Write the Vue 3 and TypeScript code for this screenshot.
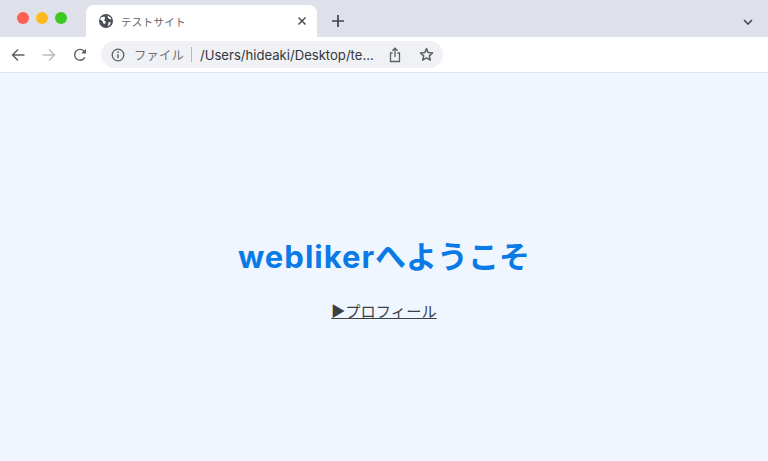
<script setup lang="ts">
const tabTitle = 'テストサイト'
const scheme = 'ファイル'
const urlText = '/Users/hideaki/Desktop/te...'
const lights = ['#fd5f50', '#fdb920', '#3dc91f']
</script>

<template>
  <div class="window">
    <div class="tabstrip">
      <div class="lights">
        <span v-for="c in lights" :key="c" class="light" :style="{ background: c }"></span>
      </div>
      <div class="tab">
        <svg class="favicon" width="14" height="14" viewBox="0 0 14 14">
          <circle cx="7" cy="7" r="7" fill="#4a4e55" />
          <path d="M2 3.2 5.4 2.6 6.2 4.6 4.9 6.2 6.8 7.6 6 10 4.2 9.4 3.4 7 1 5.6Z" fill="#fff" />
          <path d="M8.6 1.6 11.6 3.4 12.4 5.4 10.2 5 8.8 3.4ZM9.6 8.2 11.8 8 10.8 11 8.8 12.2Z" fill="#fff" />
        </svg>
        <span class="tab-title">{{ tabTitle }}</span>
        <svg class="tab-close" width="10" height="10" viewBox="0 0 10 10">
          <path d="M1.5 1.5 8.5 8.5M8.5 1.5 1.5 8.5" stroke="#4a4e55" stroke-width="1.5" fill="none" />
        </svg>
      </div>
      <svg class="new-tab" width="12" height="12" viewBox="0 0 12 12">
        <path d="M6 0V12M0 6H12" stroke="#3f434a" stroke-width="1.7" fill="none" />
      </svg>
      <svg class="tab-menu" width="10" height="6" viewBox="0 0 10 6">
        <path d="M1 1 5 5 9 1" stroke="#44484f" stroke-width="1.6" fill="none" />
      </svg>
    </div>

    <div class="toolbar">
      <svg class="nav" width="14" height="14" viewBox="0 0 14 14">
        <path d="M13.5 7H1.5M7 1.5 1.5 7 7 12.5" stroke="#5b5f66" stroke-width="1.4" fill="none" />
      </svg>
      <svg class="nav" width="14" height="14" viewBox="0 0 14 14">
        <path d="M.5 7H12.5M7 1.5 12.5 7 7 12.5" stroke="#b9bcc1" stroke-width="1.4" fill="none" />
      </svg>
      <svg class="nav" width="14" height="14" viewBox="0 0 14 14">
        <path d="M11.9 9.2A5.4 5.4 0 1 1 11.4 3.6" stroke="#5b5f66" stroke-width="1.4" fill="none" />
        <path d="M13 .8V5.6H8.2Z" fill="#5b5f66" />
      </svg>
      <div class="omnibox">
        <svg width="14" height="14" viewBox="0 0 14 14">
          <circle cx="7" cy="7" r="5.8" stroke="#5b5f66" stroke-width="1.3" fill="none" />
          <path d="M7 6.2V10.2" stroke="#5b5f66" stroke-width="1.4" />
          <circle cx="7" cy="4.2" r=".85" fill="#5b5f66" />
        </svg>
        <span class="scheme">{{ scheme }}</span>
        <span class="sep"></span>
        <span class="url">{{ urlText }}</span>
        <svg class="share" width="14" height="16" viewBox="0 0 14 16">
          <path d="M4.6 6H2.5V14.5H11.5V6H9.4" stroke="#5b5f66" stroke-width="1.3" fill="none" />
          <path d="M7 10V1.6M4.4 3.8 7 1.2 9.6 3.8" stroke="#5b5f66" stroke-width="1.3" fill="none" />
        </svg>
        <svg class="star" width="15" height="15" viewBox="0 0 15 15">
          <path d="M7.5 1.6 9.2 5.6 13.6 6 10.3 8.9 11.3 13.2 7.5 10.9 3.7 13.2 4.7 8.9 1.4 6 5.8 5.6Z" stroke="#5b5f66" stroke-width="1.5" stroke-linejoin="round" fill="none" />
        </svg>
      </div>
    </div>

    <main class="page">
      <h1 class="heading"><span class="latin">webliker</span>へようこそ</h1>
      <a class="link" href="#">▶プロフィール</a>
    </main>
  </div>
</template>

<style>
html, body {
  margin: 0;
  background: #eff6ff;
}
</style>

<style scoped>
.window {
  width: 768px;
  height: 461px;
  display: flex;
  flex-direction: column;
  overflow: hidden;
  font-family: "Inter", "Noto Sans CJK JP", sans-serif;
}

.tabstrip {
  height: 37px;
  flex: none;
  display: flex;
  align-items: flex-end;
  background: #dee1e9;
}

.lights {
  display: flex;
  gap: 7px;
  padding: 0 0 13px 17px;
  width: 69px;
  box-sizing: border-box;
  align-self: flex-end;
}

.light {
  width: 12px;
  height: 12px;
  border-radius: 50%;
}

.tab {
  width: 231px;
  height: 32px;
  margin-left: 17px;
  box-sizing: border-box;
  padding: 0 10px 0 13px;
  display: flex;
  align-items: center;
  background: #fff;
  border-radius: 8px 8px 0 0;
}

.tab-title {
  margin-left: 8px;
  font-size: 10.5px;
  color: #5f6368;
  letter-spacing: 0.3px;
  flex: 1;
}

.new-tab {
  margin: 0 0 10px 15px;
}

.tab-menu {
  margin: 0 15px 12px auto;
}

.toolbar {
  height: 35px;
  flex: none;
  display: flex;
  align-items: center;
  padding-left: 11px;
  background: #fff;
  border-bottom: 1px solid #dfe2e7;
}

.nav {
  margin-right: 17px;
}

.omnibox {
  width: 342px;
  height: 27px;
  margin-left: -3px;
  box-sizing: border-box;
  padding: 0 9px 0 10px;
  display: flex;
  align-items: center;
  background: #eff1f5;
  border-radius: 14px;
}

.scheme {
  margin-left: 9px;
  font-size: 12.3px;
  color: #6a6e74;
  letter-spacing: 0.2px;
}

.sep {
  width: 1px;
  height: 15px;
  margin: 0 8px 0 7px;
  background: #b5b8bd;
}

.url {
  flex: 1;
  font-family: "Inter", sans-serif;
  font-size: 13.1px;
  color: #33363b;
  white-space: nowrap;
}

.share {
  margin-right: 3px;
}

.star {
  margin-left: 14px;
}

.page {
  flex: 1;
  display: flex;
  flex-direction: column;
  align-items: center;
  padding-top: 164px;
  background: #eff6ff;
}

.heading {
  margin: 0;
  font-size: 31px;
  line-height: 40px;
  font-weight: 700;
  color: #0a7ae6;
}

.latin {
  letter-spacing: 1px;
}

.link {
  margin-top: 24px;
  font-size: 15.2px;
  line-height: 22px;
  letter-spacing: 0.1px;
  color: #3c3f44;
}
</style>
